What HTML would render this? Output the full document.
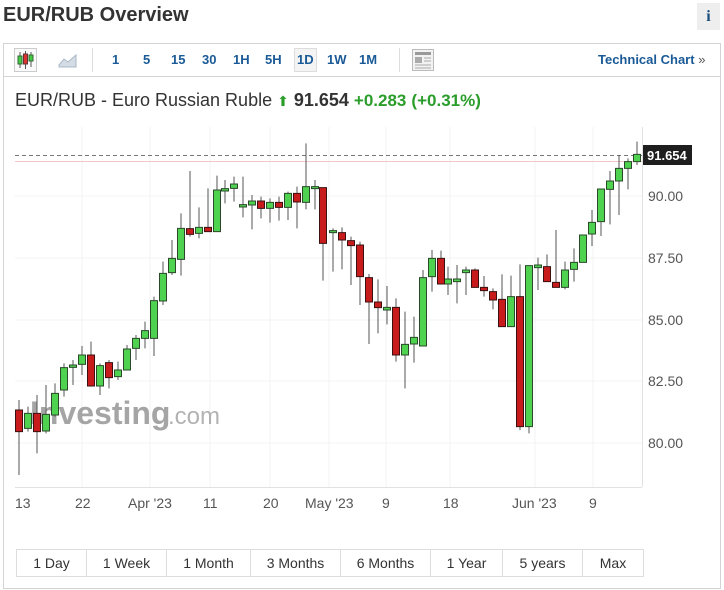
<!DOCTYPE html>
<html><head><meta charset="utf-8"><style>
*{margin:0;padding:0;box-sizing:border-box}
body{width:724px;height:590px;background:#fff;font-family:"Liberation Sans",Arial,sans-serif;position:relative;overflow:hidden;color:#333}
.abs{position:absolute}
.title{left:3px;top:4px;font-size:20px;font-weight:bold;color:#333}
.info{left:697px;top:3px;width:23px;height:27px;background:#eee;color:#1d4f7e;font-weight:bold;font-size:16px;text-align:center;line-height:27px;font-family:"Liberation Serif",serif}
.box{left:3px;top:43px;width:718px;height:546px;border:1px solid #d4d4d4}
.tb{left:4px;top:44px;width:716px;height:33px;border-bottom:1px solid #d4d4d4}
.tl{top:52px;font-size:13px;font-weight:bold;color:#1a5a96}
.sep{top:48px;width:1px;height:24px;background:#ddd}
.hdr{left:15px;top:90px;font-size:18px;color:#333;white-space:nowrap}
.btns{left:16px;top:549px;width:628px;height:28px;border:1px solid #ddd;display:flex}
.btns div{border-right:1px solid #ddd;text-align:center;font-size:14px;line-height:26px;color:#333}
.btns div:last-child{border-right:none}
.dl{top:495px;font-size:14px;color:#555}
.yl{left:648px;font-size:14px;color:#555}
</style></head><body>
<div class="abs title">EUR/RUB Overview</div>
<div class="abs info">i</div>
<div class="abs box"></div>
<div class="abs tb"></div>
<div class="abs" style="left:14px;top:48px;width:23px;height:24px;border:1px solid #ccc;background:#fafafa"></div>
<svg class="abs" style="left:14px;top:48px" width="23" height="24">
<line x1="6" y1="4" x2="6" y2="20" stroke="#555"/><rect x="4" y="8" width="4" height="8" fill="#4c4" stroke="#363"/>
<line x1="11.5" y1="3" x2="11.5" y2="21" stroke="#555"/><rect x="9.5" y="6" width="4" height="10" fill="#d33" stroke="#633"/>
<line x1="17" y1="4" x2="17" y2="19" stroke="#555"/><rect x="15" y="7" width="4" height="6" fill="#4c4" stroke="#363"/>
</svg>
<svg class="abs" style="left:58px;top:52px" width="20" height="16"><path d="M1 13 L6 7 L10 10 L18 3 L18 15 L1 15Z" fill="#d4dde6" stroke="#a9b8c6"/></svg>
<div class="abs sep" style="left:92px"></div>
<div class="abs tl" style="left:112px">1</div>
<div class="abs tl" style="left:143px">5</div>
<div class="abs tl" style="left:171px">15</div>
<div class="abs tl" style="left:202px">30</div>
<div class="abs tl" style="left:233px">1H</div>
<div class="abs tl" style="left:265px">5H</div>
<div class="abs" style="left:294px;top:48px;width:23px;height:24px;border:1px solid #ddd;background:#f4f4f4"></div>
<div class="abs tl" style="left:297px">1D</div>
<div class="abs tl" style="left:327px">1W</div>
<div class="abs tl" style="left:359px">1M</div>
<div class="abs sep" style="left:399px"></div>
<svg class="abs" style="left:412px;top:49px" width="22" height="22"><rect x="0.5" y="0.5" width="21" height="21" fill="#f2f2f2" stroke="#bbb"/><rect x="3" y="3" width="16" height="3" fill="#999"/><rect x="3" y="8" width="7" height="6" fill="#aaa"/><path d="M12 9h7M12 12h7M3 16h16M3 19h16" stroke="#aaa"/></svg>
<div class="abs tl" style="left:598px">Technical Chart <span style="font-weight:normal;color:#555">»</span></div>
<div class="abs hdr">EUR/RUB - Euro Russian Ruble <span style="color:#2a9d2a;font-size:14px">&#11014;</span> <b>91.654</b> <b style="color:#2a9d2a;font-size:17px">+0.283</b> <b style="color:#2a9d2a;font-size:17px">(+0.31%)</b></div>

<svg class="abs" style="left:0;top:0" width="724" height="590">
<g stroke="#f3f3f3">
<line x1="15" y1="196" x2="642" y2="196"/><line x1="15" y1="258" x2="642" y2="258"/><line x1="15" y1="320" x2="642" y2="320"/><line x1="15" y1="381" x2="642" y2="381"/><line x1="15" y1="443" x2="642" y2="443"/>
<line x1="82" y1="127" x2="82" y2="487"/><line x1="150" y1="127" x2="150" y2="487"/><line x1="210" y1="127" x2="210" y2="487"/><line x1="270" y1="127" x2="270" y2="487"/><line x1="329" y1="127" x2="329" y2="487"/><line x1="386" y1="127" x2="386" y2="487"/><line x1="450" y1="127" x2="450" y2="487"/><line x1="535" y1="127" x2="535" y2="487"/><line x1="593" y1="127" x2="593" y2="487"/>
</g>
<line x1="642.5" y1="127" x2="642.5" y2="487" stroke="#e2e2e2"/>
<line x1="15" y1="487.5" x2="642" y2="487.5" stroke="#e2e2e2"/>
<line x1="15" y1="161.5" x2="642" y2="161.5" stroke="#f0c8c8"/>
<line x1="15" y1="155.5" x2="642" y2="155.5" stroke="#777" stroke-dasharray="4,3"/>
<text x="30" y="424" font-family="Liberation Sans,sans-serif" font-weight="bold" font-size="32" fill="#888" opacity="0.75">Investing</text>
<text x="168" y="424" font-family="Liberation Sans,sans-serif" font-size="24" fill="#999" opacity="0.75">.com</text>
<g transform="translate(0,130) scale(1,0.33333)">
<path vector-effect="non-scaling-stroke" stroke="#555" fill="none" d="M19 810V1035M28 830V905M37 795V970M46 765V910M55 760V860M64 700V800M73 690V765M82 648V735M91 635V770M100 700V795M109 690V775M118 695V750M127 645V720M136 615V690M145 575V655M154 500V678M163 395V525M172 330V435M181 250V437M190 123V320M199 232V325M208 175V305M217 137V305M225 150V220M234 140V215M243 140V262M252 195V298M261 200V265M270 205V278M279 200V272M288 185V270M297 170V295M306 40V238M315 150V238M323 173V452M333 295V425M342 292V418M351 320V465M360 335V525M369 432V642M378 448V610M387 468V583M396 505V695M405 545V775M414 560V698M423 420V648M432 360V485M441 362V462M448 410V495M457 405V520M466 410V495M475 415V472M484 438V500M493 475V538M502 433V590M511 437V590M520 403V900M529 407V910M538 383V480M547 373V455M556 300V472M565 395V478M574 355V455M583 315V397M592 240V348M601 177V318M610 123V283M619 75V255M628 85V178M637 35V105"/>
<g stroke="#2a4a2a" fill="#4fd24f">
<rect vector-effect="non-scaling-stroke" x="24.5" y="850" width="7" height="45"/>
<rect vector-effect="non-scaling-stroke" x="42.5" y="853" width="7" height="50"/>
<rect vector-effect="non-scaling-stroke" x="51.5" y="790" width="7" height="65"/>
<rect vector-effect="non-scaling-stroke" x="60.5" y="713" width="7" height="67"/>
<rect vector-effect="non-scaling-stroke" x="69.5" y="705" width="7" height="7"/>
<rect vector-effect="non-scaling-stroke" x="78.5" y="675" width="7" height="28"/>
<rect vector-effect="non-scaling-stroke" x="96.5" y="707" width="7" height="61"/>
<rect vector-effect="non-scaling-stroke" x="114.5" y="720" width="7" height="20"/>
<rect vector-effect="non-scaling-stroke" x="123.5" y="657" width="7" height="63"/>
<rect vector-effect="non-scaling-stroke" x="132.5" y="625" width="7" height="30"/>
<rect vector-effect="non-scaling-stroke" x="141.5" y="602" width="7" height="23"/>
<rect vector-effect="non-scaling-stroke" x="150.5" y="512" width="7" height="113"/>
<rect vector-effect="non-scaling-stroke" x="159.5" y="430" width="7" height="83"/>
<rect vector-effect="non-scaling-stroke" x="168.5" y="385" width="7" height="43"/>
<rect vector-effect="non-scaling-stroke" x="177.5" y="295" width="7" height="93"/>
<rect vector-effect="non-scaling-stroke" x="195.5" y="292" width="7" height="18"/>
<rect vector-effect="non-scaling-stroke" x="213.5" y="180" width="7" height="125"/>
<rect vector-effect="non-scaling-stroke" x="221.5" y="176" width="7" height="7"/>
<rect vector-effect="non-scaling-stroke" x="230.5" y="162" width="7" height="13"/>
<rect vector-effect="non-scaling-stroke" x="239.5" y="224" width="7" height="7"/>
<rect vector-effect="non-scaling-stroke" x="248.5" y="213" width="7" height="12"/>
<rect vector-effect="non-scaling-stroke" x="266.5" y="217" width="7" height="18"/>
<rect vector-effect="non-scaling-stroke" x="284.5" y="190" width="7" height="42"/>
<rect vector-effect="non-scaling-stroke" x="302.5" y="170" width="7" height="47"/>
<rect vector-effect="non-scaling-stroke" x="311.5" y="170" width="7" height="6"/>
<rect vector-effect="non-scaling-stroke" x="329.5" y="302" width="7" height="6"/>
<rect vector-effect="non-scaling-stroke" x="383.5" y="532" width="7" height="8"/>
<rect vector-effect="non-scaling-stroke" x="401.5" y="643" width="7" height="32"/>
<rect vector-effect="non-scaling-stroke" x="410.5" y="622" width="7" height="20"/>
<rect vector-effect="non-scaling-stroke" x="419.5" y="443" width="7" height="205"/>
<rect vector-effect="non-scaling-stroke" x="428.5" y="385" width="7" height="55"/>
<rect vector-effect="non-scaling-stroke" x="444.5" y="447" width="7" height="15"/>
<rect vector-effect="non-scaling-stroke" x="453.5" y="447" width="7" height="8"/>
<rect vector-effect="non-scaling-stroke" x="462.5" y="420" width="7" height="8"/>
<rect vector-effect="non-scaling-stroke" x="507.5" y="500" width="7" height="90"/>
<rect vector-effect="non-scaling-stroke" x="525.5" y="407" width="7" height="483"/>
<rect vector-effect="non-scaling-stroke" x="534.5" y="405" width="7" height="8"/>
<rect vector-effect="non-scaling-stroke" x="561.5" y="420" width="7" height="52"/>
<rect vector-effect="non-scaling-stroke" x="570.5" y="397" width="7" height="21"/>
<rect vector-effect="non-scaling-stroke" x="579.5" y="315" width="7" height="82"/>
<rect vector-effect="non-scaling-stroke" x="588.5" y="277" width="7" height="35"/>
<rect vector-effect="non-scaling-stroke" x="597.5" y="177" width="7" height="98"/>
<rect vector-effect="non-scaling-stroke" x="606.5" y="153" width="7" height="25"/>
<rect vector-effect="non-scaling-stroke" x="615.5" y="115" width="7" height="38"/>
<rect vector-effect="non-scaling-stroke" x="624.5" y="95" width="7" height="20"/>
<rect vector-effect="non-scaling-stroke" x="633.5" y="73" width="7" height="22"/>
</g>
<g stroke="#3a1010" fill="#c81c1c">
<rect vector-effect="non-scaling-stroke" x="15.5" y="840" width="7" height="65"/>
<rect vector-effect="non-scaling-stroke" x="33.5" y="850" width="7" height="55"/>
<rect vector-effect="non-scaling-stroke" x="87.5" y="675" width="7" height="93"/>
<rect vector-effect="non-scaling-stroke" x="105.5" y="698" width="7" height="45"/>
<rect vector-effect="non-scaling-stroke" x="186.5" y="296" width="7" height="17"/>
<rect vector-effect="non-scaling-stroke" x="204.5" y="292" width="7" height="13"/>
<rect vector-effect="non-scaling-stroke" x="257.5" y="213" width="7" height="22"/>
<rect vector-effect="non-scaling-stroke" x="275.5" y="217" width="7" height="15"/>
<rect vector-effect="non-scaling-stroke" x="293.5" y="190" width="7" height="26"/>
<rect vector-effect="non-scaling-stroke" x="319.5" y="173" width="7" height="167"/>
<rect vector-effect="non-scaling-stroke" x="338.5" y="308" width="7" height="22"/>
<rect vector-effect="non-scaling-stroke" x="347.5" y="332" width="7" height="15"/>
<rect vector-effect="non-scaling-stroke" x="356.5" y="345" width="7" height="95"/>
<rect vector-effect="non-scaling-stroke" x="365.5" y="443" width="7" height="73"/>
<rect vector-effect="non-scaling-stroke" x="374.5" y="516" width="7" height="17"/>
<rect vector-effect="non-scaling-stroke" x="392.5" y="532" width="7" height="143"/>
<rect vector-effect="non-scaling-stroke" x="437.5" y="385" width="7" height="77"/>
<rect vector-effect="non-scaling-stroke" x="471.5" y="420" width="7" height="52"/>
<rect vector-effect="non-scaling-stroke" x="480.5" y="472" width="7" height="10"/>
<rect vector-effect="non-scaling-stroke" x="489.5" y="485" width="7" height="25"/>
<rect vector-effect="non-scaling-stroke" x="498.5" y="508" width="7" height="82"/>
<rect vector-effect="non-scaling-stroke" x="516.5" y="500" width="7" height="390"/>
<rect vector-effect="non-scaling-stroke" x="543.5" y="410" width="7" height="45"/>
<rect vector-effect="non-scaling-stroke" x="552.5" y="457" width="7" height="15"/>
</g>
</g>
<rect x="643" y="145" width="49" height="20" fill="#1e1e1e"/>
<text x="647" y="160" font-family="Liberation Sans,sans-serif" font-size="13" fill="#fff" font-weight="bold">91.654</text>
</svg>
<div class="abs yl" style="top:188px">90.00</div>
<div class="abs yl" style="top:250px">87.50</div>
<div class="abs yl" style="top:312px">85.00</div>
<div class="abs yl" style="top:373px">82.50</div>
<div class="abs yl" style="top:435px">80.00</div>
<div class="abs dl" style="left:15px">13</div>
<div class="abs dl" style="left:75px">22</div>
<div class="abs dl" style="left:128px">Apr '23</div>
<div class="abs dl" style="left:203px">11</div>
<div class="abs dl" style="left:263px">20</div>
<div class="abs dl" style="left:305px">May '23</div>
<div class="abs dl" style="left:382px">9</div>
<div class="abs dl" style="left:443px">18</div>
<div class="abs dl" style="left:512px">Jun '23</div>
<div class="abs dl" style="left:589px">9</div>
<div class="abs btns">
<div style="width:70px">1 Day</div><div style="width:80px">1 Week</div><div style="width:84px">1 Month</div><div style="width:90px">3 Months</div><div style="width:90px">6 Months</div><div style="width:72px">1 Year</div><div style="width:80px">5 years</div><div style="flex:1">Max</div>
</div>
</body></html>
